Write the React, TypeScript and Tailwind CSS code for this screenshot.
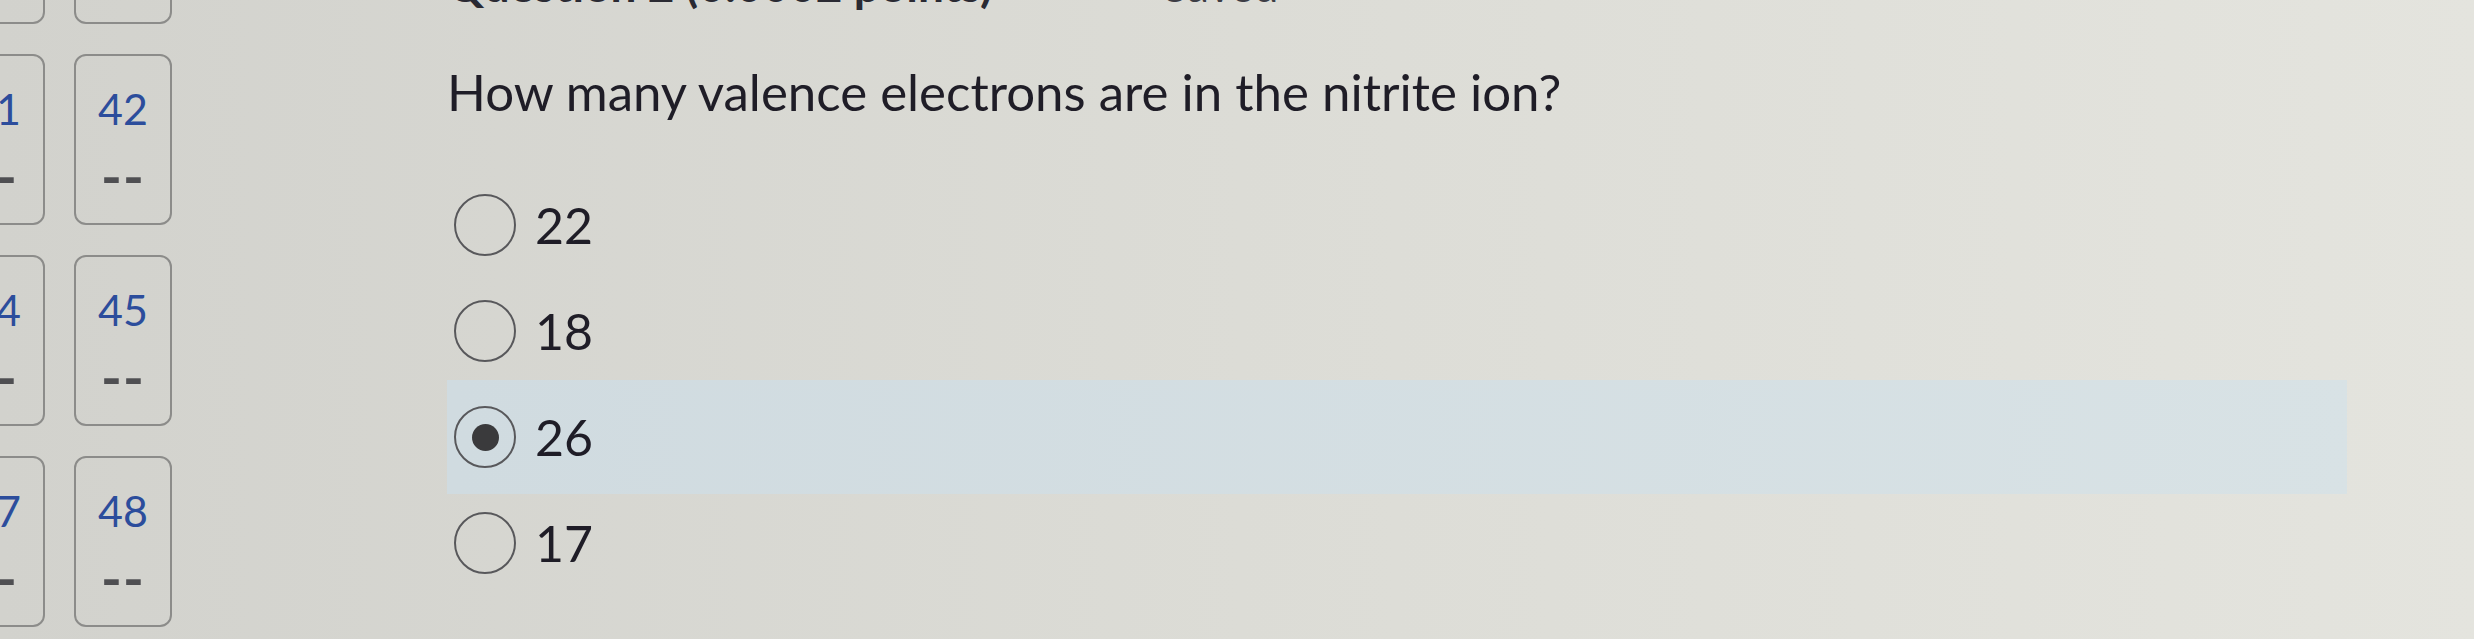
const NAV_COLUMNS = [
  [38, 41, 44, 47],
  [39, 42, 45, 48],
];

const OPTIONS = [
  { label: "22", selected: false },
  { label: "18", selected: false },
  { label: "26", selected: true },
  { label: "17", selected: false },
];

function NavTile({ n }: { n: number }) {
  return (
    <div className="w-[98px] h-[171px] shrink-0 rounded-[12px] border-2 border-[#8c8c8a] flex flex-col items-center pt-[31px]">
      <span className="text-[43px] leading-none text-[#2c4d9c]">{n}</span>
      <span className="mt-[18px] text-[56px] leading-none font-bold text-[#4f4f52] tracking-[1px]">
        --
      </span>
    </div>
  );
}

function Radio({ checked }: { checked: boolean }) {
  return (
    <span className="w-[62px] h-[62px] shrink-0 rounded-full border-[2.5px] border-[#58585b] flex items-center justify-center">
      {checked && <span className="w-[27px] h-[27px] rounded-full bg-[#3a3a3c]" />}
    </span>
  );
}

export default function App() {
  return (
    <div className="w-[2474px] h-[639px] overflow-hidden flex font-[Lato,sans-serif] bg-linear-to-r from-[#d2d2cd] via-[#dcdcd6] to-[#e4e4de]">
      {/* question navigation */}
      <nav className="flex gap-[29px] ml-[-53px] mt-[-147px] shrink-0">
        {NAV_COLUMNS.map((col, i) => (
          <div key={i} className="flex flex-col gap-[30px]">
            {col.map((n) => (
              <NavTile key={n} n={n} />
            ))}
          </div>
        ))}
      </nav>

      {/* question */}
      <main className="flex-1 flex flex-col ml-[275px] mr-[127px]">
        <div className="flex items-baseline mt-[-38px] text-[#2a2a33]">
          <span className="text-[46px] leading-none font-bold">
            Question 2 (0.0002 points)
          </span>
          <span className="ml-[171px] text-[44px] leading-none text-[#3d3d45]">Saved</span>
        </div>

        <h2 className="mt-[58px] text-[51px] leading-none text-[#1f1d27]">
          How many valence electrons are in the nitrite ion?
        </h2>

        <div className="mt-[55px] flex flex-col">
          {OPTIONS.map((o) =>
            o.selected ? (
              <label
                key={o.label}
                className="h-[114px] -my-[4px] flex items-center gap-[19px] pl-[7px] bg-linear-to-r from-[#d0dbe0] to-[#d8e2e5]"
              >
                <Radio checked />
                <span className="text-[50px] leading-none text-[#1f1d27]">{o.label}</span>
              </label>
            ) : (
              <label key={o.label} className="h-[106px] flex items-center gap-[19px] pl-[7px]">
                <Radio checked={false} />
                <span className="text-[50px] leading-none text-[#1f1d27]">{o.label}</span>
              </label>
            )
          )}
        </div>
      </main>
    </div>
  );
}
